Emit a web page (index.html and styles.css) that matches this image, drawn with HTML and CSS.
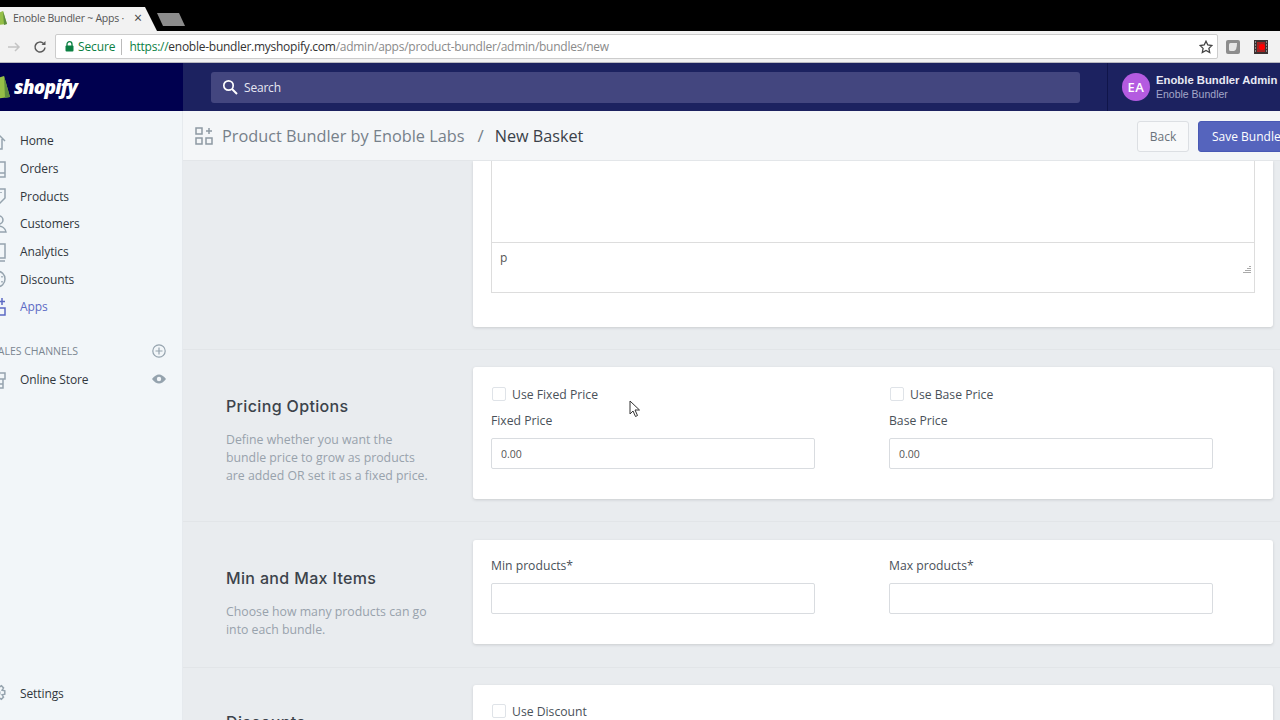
FILE: index.html
```html
<!DOCTYPE html>
<html lang="en">
<head>
    <meta charset="UTF-8">
    <title>Enoble Bundler ~ Apps</title>
    <link rel="stylesheet" href="styles.css">
</head>

<body>
<div class="tabbar">
    <div class="tab">
        <svg class="tab-icon" width="14" height="16" viewBox="0 0 14 16"><path d="M1 4l8-3 4 13-10 1z" fill="#95bf47"/><path d="M9 1l4 13-3 1z" fill="#5e8e3e"/></svg>
        <span class="tab-title">Enoble Bundler ~ Apps ·</span>
        <span class="tab-close">×</span>
    </div>
    <div class="tab-new"></div>
</div>

<div class="toolbar">
    <svg class="tool-arrow" width="14" height="14" viewBox="0 0 14 14"><path d="M1 7h11M8 3l4 4-4 4" fill="none" stroke="#c4c4c4" stroke-width="1.5"/></svg>
    <svg class="tool-reload" width="14" height="14" viewBox="0 0 14 14"><path d="M12 7.5a5 5 0 1 1-1.5-4" fill="none" stroke="#5a5a5a" stroke-width="1.5"/><path d="M12.5 1v4h-4z" fill="#5a5a5a"/></svg>
    <div class="address">
        <svg class="lock" width="9" height="11" viewBox="0 0 9 11"><path d="M2 5V3.200a2.500 2.500 0 0 1 5 0V5" fill="none" stroke="#0b8043" stroke-width="1.300"/><rect x="0.500" y="4.500" width="8" height="6" rx="1" fill="#0b8043"/></svg>
        <span class="secure">Secure</span>
        <span class="address-sep"></span>
        <span class="url"><span class="url-https">https://</span><span class="url-host">enoble-bundler.myshopify.com</span>/admin/apps/product-bundler/admin/bundles/new</span>
        <svg class="star" width="14" height="14" viewBox="0 0 14 14"><path d="M7 1.200l1.800 3.800 4.100.5-3 2.900.8 4.100L7 10.500l-3.700 2 .8-4.100-3-2.900 4.100-.5z" fill="none" stroke="#444" stroke-width="1.300"/></svg>
    </div>
    <svg class="ext-one" width="14" height="14" viewBox="0 0 14 14"><rect width="14" height="14" rx="2" fill="#8d8d8d"/><path d="M3 4.500q0-1.500 1.500-1.500H11q0 7-3 8H4.500Q3 11 3 9.500z" fill="#e6e6e6"/></svg>
    <svg class="ext-two" width="14" height="14" viewBox="0 0 14 14"><rect width="14" height="14" fill="#3c3232"/><rect x="3" y="2" width="8" height="10" fill="#a52020"/><circle cx="8" cy="7" r="3" fill="#f00"/><path d="M1 2h1M1 5h1M1 8h1M1 11h1M12 2h1M12 5h1M12 8h1M12 11h1" stroke="#ddd"/></svg>
</div>

<div class="topbar">
    <div class="brand">
        <svg class="brand-bag" width="20" height="26" viewBox="0 0 20 26"><path d="M1 6l12-4 6 21-16 2z" fill="#95bf47"/><path d="M13 2l6 21-5 1z" fill="#5e8e3e"/></svg>
        <span class="brand-name">shopify</span>
    </div>
    <div class="topbar-main">
        <div class="search">
            <svg width="16" height="16" viewBox="0 0 16 16"><circle cx="6.500" cy="6.500" r="4.700" fill="none" stroke="#fff" stroke-width="1.700"/><path d="M10 10l5 5" stroke="#fff" stroke-width="1.900"/></svg>
            <span>Search</span>
        </div>
        <div class="account">
            <div class="avatar">EA</div>
            <div>
                <p class="account-name">Enoble Bundler Admin</p>
                <p class="account-shop">Enoble Bundler</p>
            </div>
        </div>
    </div>
</div>

<div class="layout">
    <div class="sidebar">
        <ul class="nav">
            <li><svg viewBox="0 0 20 20"><path d="M2 10l8-8 8 8M5 8v10h10V8" /></svg>Home</li>
            <li><svg viewBox="0 0 20 20"><path d="M4 3h14v15H4zM4 11h5v3h9" /></svg>Orders</li>
            <li><svg viewBox="0 0 20 20"><path d="M3 3h15v9l-7 7-8-7zM14 6v1" /></svg>Products</li>
            <li><svg viewBox="0 0 20 20"><circle cx="12" cy="6" r="4"/><path d="M3 18c1-8 15-8 16 0z"/></svg>Customers</li>
            <li><svg viewBox="0 0 20 20"><path d="M8 2h10v14H8zM2 19h16"/></svg>Analytics</li>
            <li><svg viewBox="0 0 20 20"><circle cx="10" cy="10" r="8"/><path d="M15 7v1.500M15 12v1.500"/></svg>Discounts</li>
            <li class="nav-active"><svg viewBox="0 0 20 20"><path d="M15 1v7M11 4.500h7M3 11h6v7H3zM12 11h6v7h-6z"/></svg>Apps</li>
        </ul>
        <div class="channels">
            <span>SALES CHANNELS</span>
            <svg width="14" height="14" viewBox="0 0 14 14"><circle cx="7" cy="7" r="6.200"/><path d="M7 3.500v7M3.500 7h7"/></svg>
        </div>
        <ul class="nav">
            <li class="nav-store"><svg viewBox="0 0 20 20"><path d="M5 3h13v6H5zM7 9v9h9V9M7 14h9"/></svg><span>Online Store</span>
                <svg class="eye" width="14" height="10" viewBox="0 0 14 10"><path d="M0 5q7-9 14 0q-7 9-14 0z" fill="#95a3ae"/><circle cx="7" cy="5" r="2.200" fill="#f2f6f9"/></svg>
            </li>
        </ul>
        <ul class="nav nav-bottom">
            <li><svg viewBox="0 0 20 20"><path d="M8.500 1.500h3l.6 2.600 2.300-1.300 2.100 2.100-1.400 2.300 2.700.6v3.400l-2.700.6 1.400 2.300-2.100 2.100-2.300-1.400-.6 2.700h-3l-.6-2.700-2.300 1.400-2.100-2.100 1.400-2.300-2.700-.6V8.400l2.700-.6-1.400-2.300 2.100-2.100 2.300 1.300z"/><circle cx="10" cy="10" r="2.800"/></svg>Settings</li>
        </ul>
    </div>

    <div class="main">
        <div class="page-header">
            <svg class="page-icon" width="18" height="18" viewBox="0 0 18 18"><path d="M1 1h6v6H1zM1 11h6v6H1zM11 11h6v6h-6zM14 1v6M11 4h6"/></svg>
            <span class="crumb">Product Bundler by Enoble Labs</span>
            <span class="crumb-sep">/</span>
            <span class="crumb-current">New Basket</span>
            <a href="javascript:;" class="btn-back">Back</a>
            <a href="javascript:;" class="btn-save">Save Bundle</a>
        </div>

        <div class="content">
            <div class="section section-first">
                <div class="section-info"></div>
                <div class="card card-editor">
                    <div class="editor-top"></div>
                    <div class="editor-bottom">
                        <span>p</span>
                        <svg class="grip" width="9" height="9" viewBox="0 0 9 9"><path d="M8 0v1M6 2h2v1H6zM4 4h4v1H4zM2 6h6v1H2zM0 8h8v1H0z" fill="#aaa"/></svg>
                    </div>
                </div>
            </div>

            <div class="section">
                <div class="section-info">
                    <h2>Pricing Options</h2>
                    <p>Define whether you want the bundle price to grow as products are added OR set it as a fixed price.</p>
                </div>
                <div class="card">
                    <div class="fields">
                        <div>
                            <label class="check"><span class="box"></span>Use Fixed Price</label>
                            <p class="field-label">Fixed Price</p>
                            <div class="input">0.00</div>
                        </div>
                        <div>
                            <label class="check"><span class="box"></span>Use Base Price</label>
                            <p class="field-label">Base Price</p>
                            <div class="input">0.00</div>
                        </div>
                    </div>
                </div>
            </div>

            <div class="section">
                <div class="section-info">
                    <h2>Min and Max Items</h2>
                    <p>Choose how many products can go into each bundle.</p>
                </div>
                <div class="card card-minmax">
                    <div class="fields">
                        <div>
                            <p class="field-label">Min products*</p>
                            <div class="input"></div>
                        </div>
                        <div>
                            <p class="field-label">Max products*</p>
                            <div class="input"></div>
                        </div>
                    </div>
                </div>
            </div>

            <div class="section section-discount">
                <div class="section-info">
                    <h2>Discounts</h2>
                </div>
                <div class="card">
                    <label class="check"><span class="box"></span>Use Discount</label>
                </div>
            </div>
        </div>
    </div>
</div>

<svg class="cursor" width="12" height="18" viewBox="0 0 12 18"><path d="M1 1v13l3-3 2.500 5.500 2-1L6 10h4.500z" fill="#fff" stroke="#333" stroke-width="1"/></svg>
</body>
</html>
```

FILE: styles.css
```css
*{
    padding: 0;
    margin: 0;
    box-sizing: border-box;
}
html,body{
    width: 1280px;
    height: 720px;
    overflow: hidden;
}
body{
    font-family: "Open Sans", "Noto Sans", sans-serif;
    font-size: 13px;
    color: #3f4650;
    background-color: #e9ecef;
    display: flex;
    flex-direction: column;
}
ul{
    list-style: none;
}

/* browser */
.tabbar{
    height: 31px;
    background-color: #000;
    display: flex;
    align-items: flex-end;
    flex-shrink: 0;
}
.tab{
    width: 157px;
    height: 24px;
    background-color: #f2f2f2;
    clip-path: polygon(0 0, 145px 0, 157px 100%, 0 100%);
    display: flex;
    align-items: center;
    padding-bottom: 2px;
}
.tab-icon{
    margin-left: -6px;
    margin-right: 5px;
}
.tab-title{
    font-size: 10.500px;
    letter-spacing: -0.250px;
    color: #555;
    width: 106px;
    white-space: nowrap;
}
.tab-close{
    font-size: 14px;
    line-height: 14px;
    color: #444;
    margin-left: 15px;
}
.tab-new{
    width: 28px;
    height: 13px;
    background-color: #8c8c8c;
    clip-path: polygon(0 0, 22px 0, 100% 100%, 6px 100%);
    margin-bottom: 5px;
}
.toolbar{
    height: 32px;
    background-color: #f2f2f2;
    border-bottom: 1px solid #b8b8c0;
    display: flex;
    align-items: center;
    padding-left: 7px;
    flex-shrink: 0;
}
.tool-arrow{
    margin-right: 12px;
}
.address{
    width: 1163px;
    height: 25px;
    margin-left: 8px;
    background-color: #fff;
    border: 1px solid #ccc;
    border-radius: 2px;
    display: flex;
    align-items: center;
    padding-left: 9px;
    font-size: 12px;
}
.secure{
    color: #0b8043;
    margin-left: 4px;
    letter-spacing: -0.1px;
}
.address-sep{
    width: 1px;
    height: 16px;
    background-color: #bbb;
    margin: 0 7px 0 6px;
}
.url{
    color: #8a8a8a;
    letter-spacing: -0.260px;
    white-space: nowrap;
}
.url-https{
    color: #0b8043;
}
.url-host{
    color: #333;
}
.star{
    margin-left: auto;
    margin-right: 4px;
}
.ext-one{
    margin-left: 8px;
}
.ext-two{
    margin-left: 14px;
}

/* top bar */
.topbar{
    height: 48px;
    display: flex;
    flex-shrink: 0;
}
.brand{
    width: 183px;
    flex-shrink: 0;
    background-color: #00004f;
    display: flex;
    align-items: center;
}
.brand-bag{
    margin-left: -9px;
    margin-right: 3px;
}
.brand-name{
    font-family: "Open Sans", sans-serif;
    font-weight: 800;
    font-style: italic;
    font-size: 19px;
    letter-spacing: -0.800px;
    color: #fff;
}
.topbar-main{
    flex: 1;
    min-width: 0;
    background-color: #1c2260;
    display: flex;
    align-items: center;
    padding-left: 28px;
}
.search{
    width: 869px;
    flex-shrink: 0;
    height: 31px;
    background-color: #43467f;
    border-radius: 3px;
    display: flex;
    align-items: center;
    padding-left: 11px;
    gap: 6px;
    color: #e6e7f2;
    font-size: 12px;
    letter-spacing: -0.200px;
}
.account{
    height: 100%;
    margin-left: 27px;
    padding-left: 14px;
    border-left: 1px solid #10154a;
    display: flex;
    align-items: center;
    gap: 6px;
    white-space: nowrap;
}
.avatar{
    width: 28px;
    height: 28px;
    border-radius: 50%;
    background-color: #b45be0;
    color: #fff;
    font-family: "Open Sans", sans-serif;
    font-weight: 600;
    font-size: 13px;
    letter-spacing: 0.5px;
    text-align: center;
    line-height: 28px;
}
.account-name{
    font-family: "Liberation Sans", sans-serif;
    font-weight: bold;
    font-size: 11.300px;
    line-height: 15px;
    color: #e8e9f4;
}
.account-shop{
    font-family: "Liberation Sans", sans-serif;
    font-size: 10.500px;
    line-height: 13px;
    color: #a3a7c9;
}

/* sidebar */
.layout{
    flex: 1;
    display: flex;
    min-height: 0;
}
.sidebar{
    width: 183px;
    flex-shrink: 0;
    background-color: #f2f6f9;
    border-right: 1px solid #e6eaee;
    display: flex;
    flex-direction: column;
    padding-top: 16px;
    overflow: hidden;
}
.nav li{
    height: 27.700px;
    display: flex;
    align-items: center;
    gap: 13px;
    margin-left: -13px;
    font-size: 12px;
    letter-spacing: -0.1px;
    color: #31373d;
}
.nav li > svg:first-child{
    width: 20px;
    height: 20px;
    fill: none;
    stroke: #95a3ae;
    stroke-width: 1.500;
    flex-shrink: 0;
}
.nav .nav-active{
    color: #5c6ac4;
}
.nav .nav-active > svg:first-child{
    stroke: #5c6ac4;
}
.channels{
    height: 28px;
    margin-top: 16px;
    margin-bottom: 1px;
    margin-left: -8px;
    padding-right: 16px;
    display: flex;
    align-items: center;
    justify-content: space-between;
    font-size: 10.500px;
    color: #7b8691;
}
.channels svg{
    fill: none;
    stroke: #95a3ae;
    stroke-width: 1.200;
}
.nav-store{
    padding-right: 16px;
}
.eye{
    margin-left: auto;
    margin-bottom: 1px;
}
.nav-bottom{
    margin-top: auto;
    margin-bottom: 13px;
}

/* page */
.main{
    flex: 1;
    min-width: 0;
    display: flex;
    flex-direction: column;
}
.page-header{
    height: 50px;
    flex-shrink: 0;
    background-color: #f4f6f8;
    border-bottom: 1px solid #e3e6e9;
    display: flex;
    align-items: center;
    padding-left: 12px;
    white-space: nowrap;
}
.page-icon{
    fill: none;
    stroke: #8d99a3;
    stroke-width: 1.500;
    margin-right: 9px;
}
.crumb{
    font-size: 16.300px;
    color: #76808a;
}
.crumb-sep{
    font-size: 17px;
    color: #76808a;
    margin: 0 11px 0 13px;
}
.crumb-current{
    font-size: 16.200px;
    color: #3a4149;
}
.page-header a{
    height: 31px;
    margin-top: 2px;
    line-height: 29px;
    font-size: 12px;
    text-decoration: none;
    border-radius: 3px;
    flex-shrink: 0;
}
.btn-back{
    margin-left: auto;
    width: 52px;
    text-align: center;
    color: #6a727a;
    background-color: #f8f9fa;
    border: 1px solid #dcdfe3;
}
.btn-save{
    width: 92px;
    margin-left: 9px;
    margin-right: -10px;
    padding-left: 13px;
    color: #fff;
    background-color: #5564bd;
    border: 1px solid #4959b5;
}
.content{
    flex: 1;
    overflow: hidden;
}
.section{
    display: flex;
    padding: 17px 7px 22px 43px;
    border-bottom: 1px solid #e2e5e8;
}
.section-first{
    padding-top: 0;
}
.section-info{
    width: 247px;
    flex-shrink: 0;
    padding-top: 30px;
    padding-right: 40px;
}
.section-discount .section-info{
    padding-top: 28px;
}
.section-discount .card{
    padding-top: 17px;
}
.section-info h2{
    font-family: "Inter", sans-serif;
    font-size: 16px;
    font-weight: 500;
    letter-spacing: 0.35px;
    line-height: 19px;
    color: #3c434b;
    margin-bottom: 15px;
}
.section-info p{
    font-size: 12.300px;
    line-height: 18px;
    color: #98a2ac;
}
.card{
    width: 800px;
    background-color: #fff;
    border-radius: 3px;
    box-shadow: 0 1px 3px rgba(63,63,68,.18);
    padding: 18px 42px 30px 18px;
}
.card-editor{
    padding: 0 18px 34px 18px;
    border-radius: 0 0 3px 3px;
}
.card-minmax{
    margin: 1px 0;
    padding-top: 17px;
}
.editor-top{
    height: 82px;
    border: 1px solid #ddd;
    border-top: 0;
}
.editor-bottom{
    height: 50px;
    border: 1px solid #ddd;
    border-top: 0;
    padding: 6px 8px;
    font-size: 12px;
    position: relative;
    color: #555;
}
.grip{
    position: absolute;
    right: 2px;
    bottom: 19px;
}
.fields{
    display: grid;
    grid-template-columns: 324px 324px;
    column-gap: 74px;
}
.check{
    display: flex;
    align-items: center;
    height: 18px;
    gap: 6px;
    padding-left: 1px;
    font-size: 12.200px;
    color: #4a5159;
}
.box{
    width: 14px;
    height: 14px;
    border: 1px solid #dfe3e8;
    border-radius: 2px;
    background-color: #fff;
}
.field-label{
    font-size: 12.200px;
    line-height: 18px;
    color: #4a5159;
    margin-top: 9px;
    margin-bottom: 8px;
}
.card-minmax .field-label{
    margin-top: 0;
}
.input{
    height: 31px;
    border: 1px solid #d9dce0;
    border-radius: 2px;
    padding-left: 9px;
    line-height: 30px;
    font-size: 10.500px;
    color: #555;
}
.cursor{
    position: absolute;
    left: 629px;
    top: 400px;
}
```
